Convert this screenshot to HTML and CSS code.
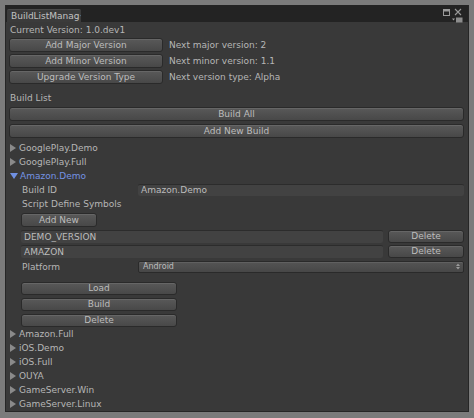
FILE: index.html
```html
<!DOCTYPE html>
<html>
<head>
<meta charset="utf-8">
<link rel="stylesheet" href="styles.css">
</head>
<body>
<div class="window">
  <div class="titlebar">
    <div class="tab">BuildListManag<span class="fade">·</span></div>
    <div class="tbicons">
      <svg class="icon-max" width="7" height="7" viewBox="0 0 7 7"><rect x="0.5" y="0.5" width="6" height="6" fill="none" stroke="#9a9a9a"/><rect x="0.5" y="0.5" width="6" height="2" fill="#9a9a9a"/></svg>
      <svg class="icon-close" width="8" height="8" viewBox="0 0 8 8"><path d="M1 1 L7 7 M7 1 L1 7" stroke="#9a9a9a" stroke-width="1.1"/></svg>
    </div>
    <svg class="icon-menu" width="11" height="6" viewBox="0 0 11 6"><path d="M0 1.5 L3 1.5 L1.5 3.5 Z" fill="#a0a0a0"/><rect x="4" y="0.5" width="6.5" height="5" fill="#8c8c8c"/></svg>
  </div>
  <div class="content">
    <div class="label row-cv">Current Version: 1.0.dev1</div>
    <div class="vrow"><div class="btn vbtn">Add Major Version</div><div class="label next">Next major version: 2</div></div>
    <div class="vrow"><div class="btn vbtn">Add Minor Version</div><div class="label next">Next minor version: 1.1</div></div>
    <div class="vrow"><div class="btn vbtn">Upgrade Version Type</div><div class="label next">Next version type: Alpha</div></div>
    <div class="label row-bl">Build List</div>
    <div class="btn wide first">Build All</div>
    <div class="btn wide last">Add New Build</div>
    <div class="fold"><span class="tri"></span>GooglePlay.Demo</div>
    <div class="fold"><span class="tri"></span>GooglePlay.Full</div>
    <div class="fold open"><span class="tri down"></span>Amazon.Demo</div>
    <div class="inner">
      <div class="prop"><div class="label plabel">Build ID</div><div class="field pfield">Amazon.Demo</div></div>
      <div class="label prop">Script Define Symbols</div>
      <div class="btn addnew">Add New</div>
      <div class="symrow first"><div class="field sym">DEMO_VERSION</div><div class="btn del">Delete</div></div>
      <div class="symrow"><div class="field sym">AMAZON</div><div class="btn del">Delete</div></div>
      <div class="prop plat"><div class="label plabel">Platform</div><div class="dropdown">Android<svg class="updown" width="4" height="7" viewBox="0 0 4 7"><path d="M0 3 L2 0.5 L4 3 Z M0 4 L2 6.5 L4 4 Z" fill="#9a9a9a"/></svg></div></div>
      <div class="btn act first">Load</div>
      <div class="btn act">Build</div>
      <div class="btn act">Delete</div>
    </div>
    <div class="fold"><span class="tri"></span>Amazon.Full</div>
    <div class="fold"><span class="tri"></span>iOS.Demo</div>
    <div class="fold"><span class="tri"></span>iOS.Full</div>
    <div class="fold"><span class="tri"></span>OUYA</div>
    <div class="fold"><span class="tri"></span>GameServer.Win</div>
    <div class="fold"><span class="tri"></span>GameServer.Linux</div>
  </div>
</div>
</body>
</html>
```

FILE: styles.css
```css
html, body {
  margin: 0;
  padding: 0;
  background: #7b7b7b;
  width: 474px;
  height: 418px;
  overflow: hidden;
}
body {
  font-family: "DejaVu Sans", sans-serif;
  font-size: 9px;
  color: #b6b6b6;
}
.window {
  position: relative;
  margin: 5px 0 0 5px;
  width: 462px;
  height: 406px;
  background: #393939;
  border: 1px solid #262626;
  border-top: none;
  display: flex;
  flex-direction: column;
}
.titlebar {
  height: 17px;
  background: #232323;
  display: flex;
  align-items: flex-end;
  position: relative;
  flex: none;
}
.tab {
  margin-left: 1px;
  height: 13px;
  padding-left: 4px;
  background: #3b3b3b;
  border-top: 1px solid #4a4a4a;
  border-radius: 2px 2px 0 0;
  line-height: 12px;
  color: #c2c2c2;
  white-space: nowrap;
  overflow: hidden;
  box-sizing: border-box;
  width: 74px;
}
.fade { color: #8a8a8a; }
.tbicons {
  position: absolute;
  right: 6px;
  top: 3px;
  display: flex;
  gap: 4px;
  align-items: center;
}
.icon-menu {
  position: absolute;
  right: 5px;
  top: 12px;
}
.content {
  padding: 0 4px 0 3px;
  display: flex;
  flex-direction: column;
}
.label {
  white-space: nowrap;
  line-height: 14px;
}
.row-cv {
  height: 16px;
  line-height: 16px;
  padding-left: 1px;
}
.btn {
  box-sizing: border-box;
  background: linear-gradient(#595959, #484848);
  border: 1px solid #2a2a2a;
  border-radius: 3px;
  box-shadow: inset 0 1px 0 #666666;
  color: #bdbdbd;
  text-align: center;
  white-space: nowrap;
}
.vrow {
  display: flex;
  align-items: center;
  gap: 6px;
  height: 14px;
  margin-bottom: 2px;
}
.vbtn {
  width: 154px;
  height: 14px;
  line-height: 12px;
}
.next {
  line-height: 14px;
}
.row-bl {
  margin-top: 5px;
  margin-bottom: 2px;
  height: 14px;
  line-height: 14px;
  padding-left: 1px;
}
.wide {
  height: 14px;
  line-height: 12px;
  margin-top: 3px;
}
.wide.first { margin-top: 0; }
.wide.last { margin-bottom: 3px; }
.fold {
  height: 14px;
  line-height: 14px;
  display: flex;
  align-items: center;
  padding-left: 1px;
  white-space: nowrap;
}
.tri {
  width: 0;
  height: 0;
  border-left: 6px solid #8a8a8a;
  border-top: 4px solid transparent;
  border-bottom: 4px solid transparent;
  margin-right: 3px;
}
.tri.down {
  border-left: 4px solid transparent;
  border-right: 4px solid transparent;
  border-top: 6px solid #6f90e2;
  border-bottom: none;
  margin-right: 2px;
}
.open { color: #7493e4; }
.inner {
  padding-left: 12px;
  display: flex;
  flex-direction: column;
}
.prop {
  height: 14px;
  display: flex;
  align-items: center;
  padding-left: 1px;
  line-height: 14px;
}
.plabel {
  width: 116px;
}
.field {
  box-sizing: border-box;
  background: #424242;
  border-top: 1px solid #2c2c2c;
  border-radius: 2px;
  color: #bcbcbc;
  padding-left: 3px;
  white-space: nowrap;
}
.pfield {
  flex: 1;
  height: 12px;
  line-height: 11px;
}
.addnew {
  width: 76px;
  height: 14px;
  line-height: 12px;
  margin-top: 2px;
}
.symrow {
  display: flex;
  gap: 5px;
  margin-top: 2px;
  height: 13px;
}
.symrow.first { margin-top: 3px; }
.sym {
  flex: 1;
  height: 13px;
  line-height: 12px;
}
.del {
  width: 76px;
  height: 13px;
  line-height: 11px;
}
.plat {
  margin-top: 1px;
  height: 15px;
}
.dropdown {
  flex: 1;
  box-sizing: border-box;
  height: 12px;
  background: linear-gradient(#545454, #474747);
  border: 1px solid #2a2a2a;
  border-radius: 2px;
  box-shadow: inset 0 1px 0 #606060;
  font-size: 8px;
  line-height: 10px;
  padding-left: 4px;
  color: #bdbdbd;
  display: flex;
  align-items: center;
  justify-content: space-between;
  padding-right: 3px;
}
.act {
  width: 156px;
  height: 13px;
  line-height: 11px;
  margin-top: 3px;
}
.act.first { margin-top: 8px; }
```
